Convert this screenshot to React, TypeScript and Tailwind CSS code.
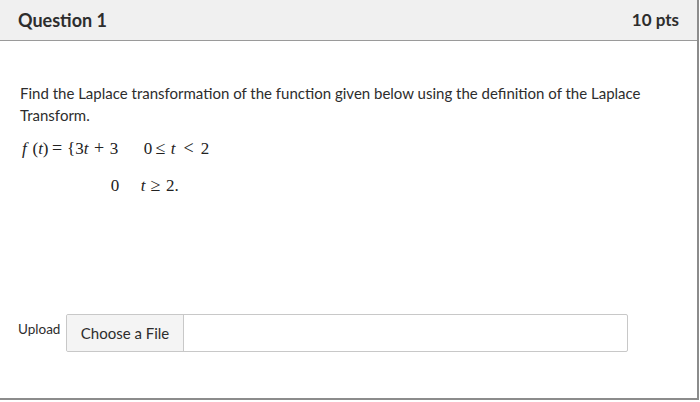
import React from 'react';

const lato = { fontFamily: 'Lato, "Liberation Sans", sans-serif' };
const serif = { fontFamily: '"Liberation Serif", "DejaVu Serif", serif' };

export default function App() {
  return (
    <div className="w-[700px] h-[402px] bg-white" style={lato}>
      <div className="w-[699px] h-[400px] border-r-2 border-b-2 border-[#8c8c8c] flex flex-col">
        {/* Header */}
        <div className="h-[41px] bg-[#f0f0f0] border-b border-[#9a9a9a] flex items-center justify-between pl-[18px] pr-[18px]">
          <span className="text-[18px] font-bold text-[#2d2d2d]">Question 1</span>
          <span className="text-[17px] font-bold text-[#2d2d2d]">10 pts</span>
        </div>

        {/* Body */}
        <div className="pl-[20px] pr-[18px] pt-[41px] text-[#2d2d2d]">
          <p className="text-[15px] leading-[22px] pr-[36px]">
            Find the Laplace transformation of the function given below using the definition of the Laplace Transform.
          </p>

          {/* Piecewise function */}
          <div className="mt-[11px] text-[17px] leading-[22px] text-[#222]" style={serif}>
            <div className="flex items-baseline pl-[2px]">
              <span className="w-[10px] italic">f</span>
              <span className="w-[17px] text-center">(<span className="italic">t</span>)</span>
              <span className="w-[16px] text-center text-[18px]">=</span>
              <span className="w-[24px] pl-[2px]">{'{'}3<span className="italic">t</span></span>
              <span className="w-[20px] text-center text-[18px]">+</span>
              <span className="w-[10px] text-center">3</span>
              <span className="w-[24px]" />
              <span className="w-[10px] text-center">0</span>
              <span className="w-[15px] text-center text-[18px]">≤</span>
              <span className="w-[10px] text-center italic">t</span>
              <span className="w-[21px] text-center text-[18px]">&lt;</span>
              <span className="w-[12px] text-center">2</span>
            </div>
            <div className="flex items-baseline pl-[90px] mt-[14px]">
              <span className="w-[10px] text-center">0</span>
              <span className="w-[18px]" />
              <span className="w-[10px] text-center italic">t</span>
              <span className="w-[15px] text-center text-[18px]">≥</span>
              <span className="pl-[3px]">2.</span>
            </div>
          </div>

          {/* Upload */}
          <div className="flex items-start mt-[117px] -ml-[2px]">
            <span className="text-[13.5px] text-[#2d2d2d] w-[48px] pt-[5px]">Upload</span>
            <div className="flex h-[38px] w-[562px] border border-[#c8c8c8] rounded-[2px] bg-white">
              <div className="w-[117px] h-full bg-[#f4f4f4] border-r border-[#c8c8c8] flex items-center justify-center text-[15px] text-[#2d2d2d] rounded-l-[2px]">
                Choose a File
              </div>
              <div className="flex-1" />
            </div>
          </div>
        </div>
      </div>
    </div>
  );
}
